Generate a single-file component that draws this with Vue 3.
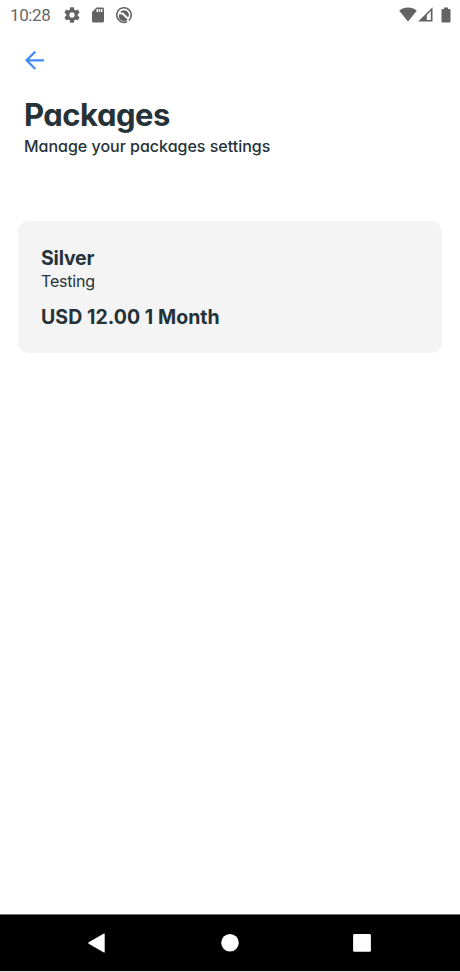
<script setup>
const plan = { name: 'Silver', description: 'Testing', price: 'USD 12.00 1 Month' }
</script>

<template>
  <div class="screen">
    <header class="status">
      <span class="clock">10:28</span>
      <svg class="gear" viewBox="2 2 20 20"><path d="M19.14 12.94c.04-.3.06-.61.06-.94s-.02-.64-.07-.94l2.03-1.58a.49.49 0 0 0 .12-.61l-1.92-3.32a.49.49 0 0 0-.59-.22l-2.39.96a7 7 0 0 0-1.62-.94l-.36-2.54a.48.48 0 0 0-.48-.41h-3.84a.47.47 0 0 0-.47.41l-.36 2.54c-.59.24-1.13.57-1.62.94l-2.39-.96a.48.48 0 0 0-.59.22L2.74 8.87a.48.48 0 0 0 .12.61l2.03 1.58c-.05.3-.09.63-.09.94s.02.64.07.94l-2.03 1.58a.49.49 0 0 0-.12.61l1.92 3.32c.12.22.37.29.59.22l2.39-.96c.5.38 1.03.7 1.62.94l.36 2.54c.05.24.24.41.48.41h3.84c.24 0 .44-.17.47-.41l.36-2.54a7 7 0 0 0 1.62-.94l2.39.96c.22.08.47 0 .59-.22l1.92-3.32a.47.47 0 0 0-.12-.61zM12 15.3a3.3 3.3 0 1 1 0-6.6 3.3 3.3 0 0 1 0 6.6z"/></svg>
      <svg class="sd" viewBox="0 0 24 24"><path d="M18 2h-8L4.02 8 4 20c0 1.1.9 2 2 2h12c1.1 0 2-.9 2-2V4c0-1.1-.9-2-2-2zm-6 6h-2V4h2v4zm3 0h-2V4h2v4zm3 0h-2V4h2v4z"/></svg>
      <svg class="badge" viewBox="0 0 18 18">
        <path class="stroke" d="M12.2 15.6A7.3 7.3 0 1 1 16.3 9.6"/>
        <path class="stroke" d="M16.3 9a7.3 7.3 0 0 1-2.5 5.5"/>
        <path d="M5 6.3A4.9 4.9 0 0 1 13.9 9c0 .9-.3 1.8-.8 2.5L10.6 9 8.3 6.8z"/>
        <path d="M4.1 8.2 7 8.4 12.6 13.4A4.9 4.9 0 0 1 4.1 9z"/>
      </svg>
      <span class="spacer"></span>
      <svg class="wifi" viewBox="0 0 18 15"><path d="M.2 3.7C5.2-.5 12.8-.5 17.8 3.7L9 14.5z"/></svg>
      <svg class="signal" viewBox="0 0 15 15"><path fill-rule="evenodd" d="M.2 14.5 14.5.2v14.3zM8.8 8.2v4.7h4V4.1z"/></svg>
      <svg class="battery" viewBox="0 0 10 16"><path d="M3 .5h4V2h1.7c.5 0 .8.3.8.8v11.9c0 .5-.3.8-.8.8H1.3a.8.8 0 0 1-.8-.8V2.8c0-.5.3-.8.8-.8H3z"/></svg>
    </header>

    <button class="back" aria-label="Back">
      <svg viewBox="0 0 20 20"><path d="M19 10.3H2M10.3 1.6 1.6 10.3l8.7 8.7"/></svg>
    </button>

    <section class="heading">
      <h1>Packages</h1>
      <p>Manage your packages settings</p>
    </section>

    <main>
      <article class="card">
        <h2>{{ plan.name }}</h2>
        <p>{{ plan.description }}</p>
        <strong>{{ plan.price }}</strong>
      </article>
    </main>

    <nav class="navbar">
      <svg viewBox="0 0 20 20"><path d="M16.7 1v18q0 .8-.8.4L.7 10.7q-1-.7 0-1.4L15.9.6q.8-.4.8.4z"/></svg>
      <svg viewBox="0 0 20 20"><circle cx="10" cy="9.8" r="8.8"/></svg>
      <svg viewBox="0 0 20 20"><rect x="1.1" y="1" width="17.8" height="17.8" rx="1.3"/></svg>
    </nav>
  </div>
</template>

<style>
body { margin: 0; background: #fff; }
</style>

<style scoped>
.screen {
  box-sizing: border-box;
  width: 460px;
  height: 972px;
  display: flex;
  flex-direction: column;
  background: #fff;
  border-bottom: 1px solid #e8e5e5;
  color: #253238;
  font-family: Inter, "Open Sans", sans-serif;
  font-feature-settings: "cv11" 1;
}
.status {
  box-sizing: border-box;
  height: 30px;
  padding: 0 9px 1px 10px;
  display: flex;
  align-items: center;
  color: #666;
}
.status svg { fill: #636363; flex: none; }
.clock { width: 54px; padding-top: 2px; font: 400 17px/29px Roboto, sans-serif; letter-spacing: -0.4px; }
.gear { width: 16px; height: 16px; }
.sd { width: 18px; height: 18px; margin-left: 9px; }
.badge { width: 18px; height: 18px; margin-left: 8px; }
.badge .stroke { fill: none; stroke: #636363; stroke-width: 1.6; }
.spacer { flex: 1; }
.wifi { width: 18px; height: 15px; }
.signal { width: 15px; height: 15px; margin-left: 1px; }
.battery { width: 10px; height: 16px; margin-left: 8px; }
.back {
  height: 60px;
  padding: 0 0 0 25px;
  border: 0;
  background: none;
  display: flex;
  align-items: center;
}
.back svg { width: 20px; height: 20px; fill: none; stroke: #448aff; stroke-width: 2.2; }
.heading { height: 131px; padding-left: 24px; }
h1, h2, p { margin: 0; white-space: nowrap; }
h1 { padding-top: 6px; font-size: 31px; line-height: 38px; font-weight: 700; letter-spacing: -0.5px; }
.heading p { padding-top: 1px; font-size: 16px; line-height: 22px; font-weight: 500; letter-spacing: -0.01px; }
main { flex: 1; padding: 0 18px; }
.card {
  box-sizing: border-box;
  height: 132px;
  padding: 24px 23px 0;
  border-radius: 11px;
  background: #f4f4f4;
}
h2 { font-size: 19.5px; line-height: 26px; font-weight: 700; letter-spacing: -0.2px; }
.card p { margin-top: -1px; font-size: 16px; line-height: 22px; font-weight: 400; letter-spacing: -0.2px; }
.card strong { display: block; margin-top: 12px; font-size: 19.5px; line-height: 26px; font-weight: 700; letter-spacing: 0.05px; white-space: nowrap; }
.navbar {
  box-sizing: border-box;
  height: 57px;
  padding: 0 88px;
  border-top: 1px solid #707070;
  background: #000;
  display: flex;
  align-items: center;
  justify-content: space-between;
}
.navbar svg { width: 20px; height: 20px; fill: #fff; }
</style>
